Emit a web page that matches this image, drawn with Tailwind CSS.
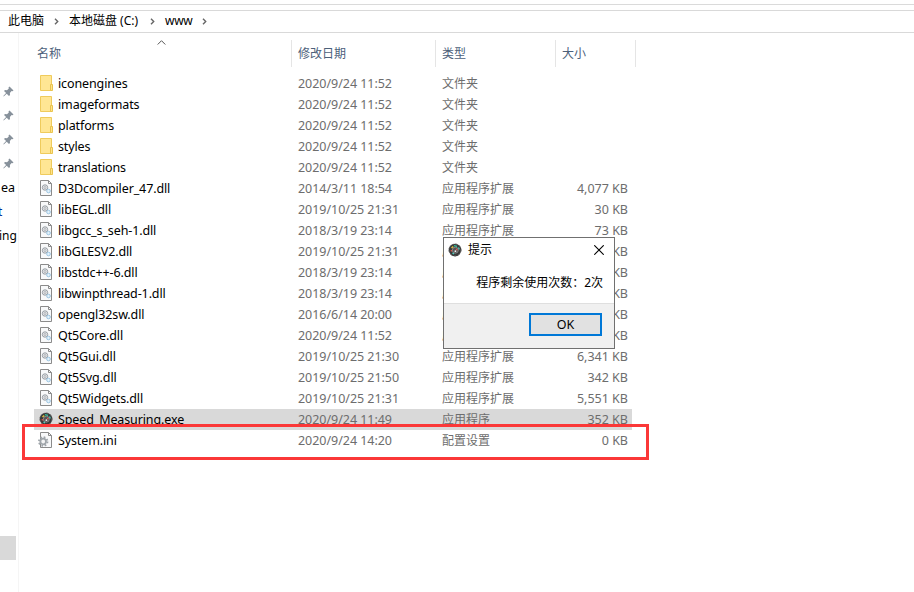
<!DOCTYPE html>
<html lang="zh-CN">
<head>
  <meta charset="UTF-8">
  <title>www</title>
  <script src="https://cdn.jsdelivr.net/npm/@tailwindcss/browser@4"></script>
</head>
<body class="bg-white w-[914px] h-[592px] overflow-hidden relative flex flex-col text-[12px] text-black font-['Noto_Sans','Noto_Sans_CJK_SC',sans-serif]">

  <!-- Icons -->
  <svg class="hidden">
    <symbol id="folder" viewBox="0 0 14 17">
      <path d="M.5 .5H11.5V15.5H.5Z" fill="#ffe694" stroke="#efcb5c"/>
      <path d="M10.5 9.5h2v6h-2z" fill="#ffe48a" stroke="#e9c34f"/>
    </symbol>
    <symbol id="dll" viewBox="0 0 14 17">
      <path d="M.5 .5h8l3 3v12H.5z" fill="#f8f9fa" stroke="#8b8b8b"/>
      <path d="M8.5 .5v3h3" fill="none" stroke="#8b8b8b"/>
      <circle cx="5" cy="7.500" r="2.700" fill="#eee" stroke="#959ca3" stroke-width="1"/>
      <circle cx="5" cy="7.500" r="1" fill="#fff" stroke="#959ca3" stroke-width=".8"/>
      <circle cx="8.500" cy="11" r="1.800" fill="#e3f2fb" stroke="#9cc5e2" stroke-width="1"/>
    </symbol>
    <symbol id="ini" viewBox="0 0 14 17">
      <path d="M2.500 .5h8l3 3v12h-11z" fill="#f8f9fa" stroke="#8b8b8b"/>
      <path d="M10.500 .5v3h3" fill="none" stroke="#8b8b8b"/>
      <circle cx="5.200" cy="9.500" r="4.300" fill="none" stroke="#a0a6ab" stroke-width="1.800" stroke-dasharray="1.700 1.677"/>
      <circle cx="5.200" cy="9.500" r="2.800" fill="#f4f4f4" stroke="#a0a6ab" stroke-width="1.800"/>
    </symbol>
    <symbol id="exe" viewBox="0 0 14 14">
      <circle cx="7" cy="7" r="6.300" fill="#3a3a3a"/>
      <circle cx="7" cy="7" r="6" fill="none" stroke="#666" stroke-width="1" stroke-dasharray="2 2"/>
      <circle cx="7.300" cy="7.200" r="3" fill="#555" stroke="#8a8a8a" stroke-width=".9"/>
      <path d="M6 2.700l3 .6" stroke="#35c4a0" stroke-width="1.200"/>
      <path d="M3.500 5l1.700-1.500" stroke="#e8c93c" stroke-width="1.300"/>
      <path d="M3.300 7v1.500M8 6.500h1.500" stroke="#e2574c" stroke-width="1.300"/>
      <path d="M10.500 4.500l.8 2M4.500 10l1.500 1" stroke="#4fd8c4" stroke-width="1.200"/>
      <circle cx="7.400" cy="8.200" r=".9" fill="#eee"/>
    </symbol>
    <symbol id="pin" viewBox="0 0 11 11">
      <path d="M6.500 .5l4 4-1 .8-.9-.2-1.700 1.800.1 2-1 1L3.700 7.700.7 10.400.3 10 3.100 7.100 1 5l1-.9 2 .1 1.800-1.700-.3-1z" fill="#87919b"/>
    </symbol>
    <symbol id="chevron" viewBox="0 0 5 7">
      <path d="M1 .8l2.700 2.700L1 6.200" fill="none" stroke="#666" stroke-width="1.400"/>
    </symbol>
  </svg>

  <!-- Address bar -->
  <div class="h-[5px] shrink-0 border-b border-[#dadada]"></div>
  <nav class="h-7 shrink-0 mt-[5px] -mb-[5px]">
    <div class="h-[23px] border-y border-[#d9d9d9] flex items-center pl-2 pb-px">
      <span class="w-[46px]">此电脑</span>
      <svg class="w-[5px] h-[7px]"><use href="#chevron"/></svg>
      <span class="w-[81px] pl-[10px] whitespace-nowrap">本地磁盘 (C:)</span>
      <svg class="w-[5px] h-[7px] ml-[10px]"><use href="#chevron"/></svg>
      <span class="w-[37px] ml-[10px] tracking-[-0.3px]">www</span>
      <svg class="w-[5px] h-[7px]"><use href="#chevron"/></svg>
    </div>
  </nav>

  <div class="flex grow">
    <!-- Quick access -->
    <aside class="w-[19px] shrink-0 border-r border-[#f5f5f5] overflow-hidden pt-[47px]">
      <div class="h-6 flex items-center pl-[3px] pb-[2px]"><svg class="w-[11px] h-[11px]"><use href="#pin"/></svg></div>
      <div class="h-6 flex items-center pl-[3px] pb-[2px]"><svg class="w-[11px] h-[11px]"><use href="#pin"/></svg></div>
      <div class="h-6 flex items-center pl-[3px] pb-[2px]"><svg class="w-[11px] h-[11px]"><use href="#pin"/></svg></div>
      <div class="h-6 flex items-center pl-[3px] pb-[2px]"><svg class="w-[11px] h-[11px]"><use href="#pin"/></svg></div>
      <div class="h-6 w-4 overflow-hidden leading-6 pl-px text-[12.5px]">ea</div>
      <div class="h-6 w-4 overflow-hidden leading-6 -indent-[2px] text-[#003399]">t</div>
      <div class="h-6 w-[17px] overflow-hidden leading-6 -indent-px">ing</div>
      <div class="h-6 w-4 mt-[288px] bg-[#d9d9d9]"></div>
    </aside>

    <main class="w-[617px] shrink-0 relative pt-[7px]">
      <!-- Column headers -->
      <header class="h-[27px] flex text-[#4c607a] leading-[27px] relative">
        <span class="w-[273px] pl-[18px] border-r border-[#e5e5e5]">名称</span>
        <span class="w-[144px] pl-[6px] border-r border-[#e5e5e5]">修改日期</span>
        <span class="w-[120px] pl-[6px] border-r border-[#e5e5e5]">类型</span>
        <span class="w-[80px] pl-[6px] border-r border-[#e5e5e5]">大小</span>
        <svg class="absolute left-[138px] top-0 w-[9px] h-[5px]" viewBox="0 0 9 5"><path d="M.7 4.500l3.800-3.800 3.800 3.800" fill="none" stroke="#555"/></svg>
      </header>
      <div id="files" class="mt-[6px] pl-[15px]"></div>
    </main>
  </div>

  <!-- Highlight box -->
  <div class="absolute left-[22px] top-[424px] w-[627px] h-[36px] border-3 border-[#fb3838]"></div>

  <!-- Message box -->
  <div class="absolute left-[443px] top-[237px] w-[172px] h-[112px] border border-[#707070] bg-white flex flex-col">
    <div class="h-[24px] flex items-center pl-1 pr-[10px]">
      <svg class="w-[14px] h-[14px]"><use href="#exe"/></svg>
      <span class="ml-[6px] grow">提示</span>
      <svg class="w-[10px] h-[10px]" viewBox="0 0 10 10"><path d="M.3 .3l9.400 9.400M9.700 .3L.3 9.700" stroke="#000" stroke-width="1.100"/></svg>
    </div>
    <p class="h-[41px] pr-[11px] leading-[41px] text-right whitespace-nowrap">程序剩余使用次数：2次</p>
    <div class="grow bg-[#f0f0f0] border-t border-[#dfdfdf] flex justify-end pt-[9px] pr-[12px]">
      <button class="w-[73px] h-[23px] border-2 border-[#0078d7] bg-[#e1e1e1] leading-[19px] text-[12.5px]">OK</button>
    </div>
  </div>

  <script>
    const files = [
      ["folder", "iconengines", "2020/9/24 11:52", "文件夹", ""],
      ["folder", "imageformats", "2020/9/24 11:52", "文件夹", ""],
      ["folder", "platforms", "2020/9/24 11:52", "文件夹", ""],
      ["folder", "styles", "2020/9/24 11:52", "文件夹", ""],
      ["folder", "translations", "2020/9/24 11:52", "文件夹", ""],
      ["dll", "D3Dcompiler_47.dll", "2014/3/11 18:54", "应用程序扩展", "4,077 KB"],
      ["dll", "libEGL.dll", "2019/10/25 21:31", "应用程序扩展", "30 KB"],
      ["dll", "libgcc_s_seh-1.dll", "2018/3/19 23:14", "应用程序扩展", "73 KB"],
      ["dll", "libGLESV2.dll", "2019/10/25 21:31", "应用程序扩展", "KB"],
      ["dll", "libstdc++-6.dll", "2018/3/19 23:14", "应用程序扩展", "KB"],
      ["dll", "libwinpthread-1.dll", "2018/3/19 23:14", "应用程序扩展", "KB"],
      ["dll", "opengl32sw.dll", "2016/6/14 20:00", "应用程序扩展", "KB"],
      ["dll", "Qt5Core.dll", "2020/9/24 11:52", "应用程序扩展", "KB"],
      ["dll", "Qt5Gui.dll", "2019/10/25 21:30", "应用程序扩展", "6,341 KB"],
      ["dll", "Qt5Svg.dll", "2019/10/25 21:50", "应用程序扩展", "342 KB"],
      ["dll", "Qt5Widgets.dll", "2019/10/25 21:31", "应用程序扩展", "5,551 KB"],
      ["exe", "Speed_Measuring.exe", "2020/9/24 11:49", "应用程序", "352 KB"],
      ["ini", "System.ini", "2020/9/24 14:20", "配置设置", "0 KB"]
    ];
    const icons = {
      folder: '<svg class="w-[14px] h-[17px] ml-[6px] mr-1"><use href="#folder"/></svg>',
      dll: '<svg class="w-[14px] h-[17px] ml-[6px] mr-1"><use href="#dll"/></svg>',
      exe: '<svg class="w-[14px] h-[14px] ml-[5px] mr-[5px] mb-[2px]"><use href="#exe"/></svg>',
      ini: '<svg class="w-[14px] h-[17px] ml-1 mr-[6px]"><use href="#ini"/></svg>'
    };

    document.getElementById("files").innerHTML = files.map(([icon, name, date, type, size]) => `
      <div class="h-[21px] w-[598px] flex items-center text-[#6d6d6d] leading-[21px] whitespace-nowrap ${icon === "exe" ? "bg-[#d9d9d9]" : ""}">
        ${icons[icon]}
        <span class="w-[240px] text-black text-[12.5px] tracking-[-0.12px]">${name}</span>
        <span class="w-[144px] text-[12.5px] tracking-[-0.04px]">${date}</span>
        <span class="w-[100px]">${type}</span>
        <span class="w-[86px] text-right text-[12.5px]">${size}</span>
      </div>`).join("");
  </script>
</body>
</html>
